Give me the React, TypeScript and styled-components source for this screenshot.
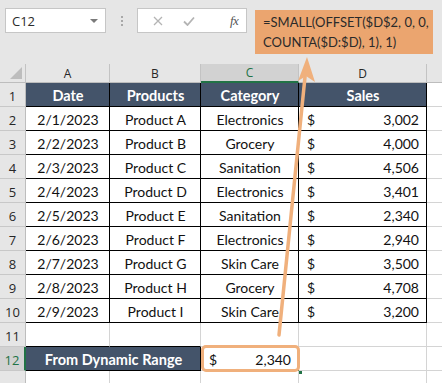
import React from 'react';
import styled, { createGlobalStyle, css } from 'styled-components';

const GlobalStyle = createGlobalStyle`
  html, body { margin: 0; padding: 0; background: #ffffff; }
  body { font-family: Lato, "Liberation Sans", sans-serif; }
`;

const ORANGE = '#eba56f';
const ARROW = '#f0b07c';
const HEAD = '#44546a';
const GREEN = '#217346';

const Frame = styled.div`
  position: relative;
  width: 442px;
  height: 383px;
  overflow: hidden;
  background: #ffffff;
`;

const Toolbar = styled.div`
  height: 64px;
  background: #e6e6e6;
  display: flex;
  align-items: flex-start;
  padding: 8px 0 0 5px;
  box-sizing: border-box;
`;

const NameBox = styled.div`
  width: 101px;
  height: 25px;
  box-sizing: border-box;
  background: #ffffff;
  border: 1px solid #c6c6c6;
  display: flex;
  align-items: center;
  justify-content: space-between;
  padding: 0 7px 0 6px;
  font-family: "Open Sans", "Noto Sans", sans-serif;
  font-size: 13px;
  color: #2b2b2b;
`;

const DropArrow = styled.span`
  width: 0;
  height: 0;
  border-left: 4px solid transparent;
  border-right: 4px solid transparent;
  border-top: 4px solid #7a7a7a;
`;

const Grip = styled.div`
  width: 31px;
  height: 25px;
  display: flex;
  flex-direction: column;
  align-items: center;
  justify-content: center;
  gap: 2px;
  span {
    width: 2px;
    height: 2px;
    background: #a8a8a8;
  }
`;

const ButtonBox = styled.div`
  width: 110px;
  height: 25px;
  box-sizing: border-box;
  background: #ffffff;
  border: 1px solid #c6c6c6;
  display: flex;
  align-items: center;
  padding-left: 15px;
  gap: 20px;
`;

const Fx = styled.span`
  margin-left: 15px;
  font-family: "Liberation Serif", "DejaVu Serif", serif;
  font-style: italic;
  font-size: 13px;
  color: #555555;
  letter-spacing: -0.5px;
`;

const FormulaBox = styled.div`
  margin-left: 8px;
  margin-top: 2px;
  width: 178px;
  height: 44px;
  box-sizing: border-box;
  background: ${ORANGE};
  padding: 2px 0 0 8px;
  font-family: Lato, "Open Sans", sans-serif;
  font-size: 13px;
  line-height: 20px;
  color: #2a2a2a;
  white-space: nowrap;
`;

const Sheet = styled.div`
  display: grid;
  grid-template-columns: 26px 84px 91px 98px 128px 1fr;
  grid-template-rows: 19px;
  grid-auto-rows: 24px;
`;

type Kind = 'corner' | 'colHead' | 'colSel' | 'rowHead' | 'rowSel' | 'head' | 'data' | 'empty' | 'label' | 'result';

const Cell = styled.div<{ $kind: Kind; $align?: 'left' | 'center' | 'right' | 'split'; $span?: number; $blackBottom?: boolean }>`
  box-sizing: border-box;
  position: relative;
  display: flex;
  align-items: center;
  justify-content: ${(p) => (p.$align === 'left' ? 'flex-start' : p.$align === 'right' ? 'flex-end' : p.$align === 'split' ? 'space-between' : 'center')};
  padding: 2px 7px 0 8px;
  font-size: 14px;
  color: #111111;
  white-space: nowrap;
  grid-column: span ${(p) => p.$span ?? 1};
  border-right: 1px solid #d4d4d4;
  border-bottom: 1px solid ${(p) => (p.$blackBottom ? '#000000' : '#d4d4d4')};

  ${(p) =>
    (p.$kind === 'colHead' || p.$kind === 'corner') &&
    css`
      background: #e6e6e6;
      border-right: 1px solid #c3c3c3;
      border-bottom: 1px solid #bdbdbd;
      font-family: "Open Sans", "Noto Sans", sans-serif;
      font-size: 12px;
      color: #262626;
      padding: 0;
    `}
  ${(p) =>
    p.$kind === 'colSel' &&
    css`
      background: #d2d2d2;
      border-right: 1px solid #c3c3c3;
      border-bottom: 2px solid ${GREEN};
      font-family: "Open Sans", "Noto Sans", sans-serif;
      font-size: 12px;
      color: ${GREEN};
      padding: 0;
    `}
  ${(p) =>
    p.$kind === 'rowHead' &&
    css`
      background: #e6e6e6;
      border-right: 1px solid #bdbdbd;
      border-bottom: 1px solid #c8c8c8;
      font-family: "Open Sans", "Noto Sans", sans-serif;
      font-size: 13px;
      color: #262626;
      padding: 3px 0 0 0;
    `}
  ${(p) =>
    p.$kind === 'rowSel' &&
    css`
      background: #d2d2d2;
      border-right: 2px solid ${GREEN};
      border-bottom: 1px solid #c8c8c8;
      font-family: "Open Sans", "Noto Sans", sans-serif;
      font-size: 13px;
      color: ${GREEN};
      padding: 3px 0 0 0;
    `}
  ${(p) =>
    (p.$kind === 'head' || p.$kind === 'label') &&
    css`
      background: ${HEAD};
      color: #ffffff;
      font-weight: 700;
      font-size: 14.5px;
      border-right: 1px solid #000000;
      border-bottom: 1px solid #000000;
    `}
  ${(p) =>
    p.$kind === 'data' &&
    css`
      border-right: 1px solid #000000;
      border-bottom: 1px solid #000000;
    `}
  ${(p) =>
    p.$kind === 'result' &&
    css`
      &::after {
        content: '';
        position: absolute;
        left: 0;
        top: -2px;
        right: -2px;
        bottom: -2px;
        border: 3px solid ${ARROW};
        border-radius: 5px;
      }
    `}
`;

const Corner = styled.span`
  position: absolute;
  right: 3px;
  bottom: 3px;
  width: 0;
  height: 0;
  border-left: 12px solid transparent;
  border-bottom: 12px solid #bdbdbd;
`;

const Handle = styled.span`
  position: absolute;
  right: -4px;
  bottom: -4px;
  width: 4px;
  height: 4px;
  background: ${GREEN};
`;

const Overlay = styled.svg`
  position: absolute;
  left: 0;
  top: 0;
  pointer-events: none;
`;

const rows = [
  ['2/1/2023', 'Product A', 'Electronics', '3,002'],
  ['2/2/2023', 'Product B', 'Grocery', '4,000'],
  ['2/3/2023', 'Product C', 'Sanitation', '4,506'],
  ['2/4/2023', 'Product D', 'Electronics', '3,401'],
  ['2/5/2023', 'Product E', 'Sanitation', '2,340'],
  ['2/6/2023', 'Product F', 'Electronics', '2,940'],
  ['2/7/2023', 'Product G', 'Skin Care', '3,500'],
  ['2/8/2023', 'Product H', 'Grocery', '4,708'],
  ['2/9/2023', 'Product I', 'Skin Care', '3,200'],
];

export default function App() {
  return (
    <>
      <GlobalStyle />
      <Frame>
        <Toolbar>
          <NameBox>
            <span>C12</span>
            <DropArrow />
          </NameBox>
          <Grip>
            <span />
            <span />
            <span />
          </Grip>
          <ButtonBox>
            <svg width="10" height="10" viewBox="0 0 10 10">
              <path d="M1 1 L9 9 M9 1 L1 9" stroke="#b4b4b4" strokeWidth="1.3" fill="none" />
            </svg>
            <svg width="12" height="10" viewBox="0 0 12 10">
              <path d="M1 5.5 L4.5 9 L11 1.5" stroke="#b4b4b4" strokeWidth="1.8" fill="none" />
            </svg>
            <Fx>fx</Fx>
          </ButtonBox>
          <FormulaBox>
            =SMALL(OFFSET($D$2, 0, 0,
            <br />
            COUNTA($D:$D), 1), 1)
          </FormulaBox>
        </Toolbar>
        <Sheet>
          <Cell $kind="corner">
            <Corner />
          </Cell>
          <Cell $kind="colHead">A</Cell>
          <Cell $kind="colHead">B</Cell>
          <Cell $kind="colSel">C</Cell>
          <Cell $kind="colHead">D</Cell>
          <Cell $kind="colHead" />

          <Cell $kind="rowHead">1</Cell>
          <Cell $kind="head">Date</Cell>
          <Cell $kind="head">Products</Cell>
          <Cell $kind="head">Category</Cell>
          <Cell $kind="head">Sales</Cell>
          <Cell $kind="empty" />

          {rows.map((r, i) => (
            <React.Fragment key={r[0]}>
              <Cell $kind="rowHead">{i + 2}</Cell>
              <Cell $kind="data">{r[0]}</Cell>
              <Cell $kind="data">{r[1]}</Cell>
              <Cell $kind="data">{r[2]}</Cell>
              <Cell $kind="data" $align="split">
                <span>$</span>
                <span>{r[3]}</span>
              </Cell>
              <Cell $kind="empty" />
            </React.Fragment>
          ))}

          <Cell $kind="rowHead">11</Cell>
          <Cell $kind="empty" $blackBottom />
          <Cell $kind="empty" $blackBottom />
          <Cell $kind="empty" />
          <Cell $kind="empty" />
          <Cell $kind="empty" />

          <Cell $kind="rowSel">12</Cell>
          <Cell $kind="label" $span={2}>
            From Dynamic Range
          </Cell>
          <Cell $kind="result" $align="split">
            <span>$</span>
            <span>2,340</span>
            <Handle />
          </Cell>
          <Cell $kind="empty" />
          <Cell $kind="empty" />

          <Cell $kind="rowHead" />
          <Cell $kind="empty" />
          <Cell $kind="empty" />
          <Cell $kind="empty" />
          <Cell $kind="empty" />
          <Cell $kind="empty" />
        </Sheet>
        <Overlay width="442" height="383" viewBox="0 0 442 383">
          <line x1="279" y1="335" x2="305.5" y2="72" stroke={ARROW} strokeWidth="3.5" strokeLinecap="round" />
          <polygon points="307,57 315,82 306,76 298,81" fill={ARROW} />
        </Overlay>
      </Frame>
    </>
  );
}
